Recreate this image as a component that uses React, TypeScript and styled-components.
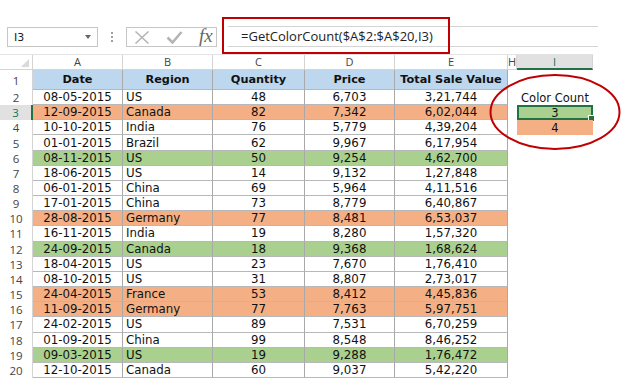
import React from 'react';
import styled, { createGlobalStyle } from 'styled-components';

type Fill = 'none' | 'head' | 'orange' | 'green';

const fills: Record<Fill, string> = {
  none: '#ffffff',
  head: '#bdd7ee',
  orange: '#f4b084',
  green: '#a9d08e',
};

const rows: { cells: string[]; fill: Fill }[] = [
  { cells: ['08-05-2015', 'US', '48', '6,703', '3,21,744'], fill: 'none' },
  { cells: ['12-09-2015', 'Canada', '82', '7,342', '6,02,044'], fill: 'orange' },
  { cells: ['10-10-2015', 'India', '76', '5,779', '4,39,204'], fill: 'none' },
  { cells: ['01-01-2015', 'Brazil', '62', '9,967', '6,17,954'], fill: 'none' },
  { cells: ['08-11-2015', 'US', '50', '9,254', '4,62,700'], fill: 'green' },
  { cells: ['18-06-2015', 'US', '14', '9,132', '1,27,848'], fill: 'none' },
  { cells: ['06-01-2015', 'China', '69', '5,964', '4,11,516'], fill: 'none' },
  { cells: ['17-01-2015', 'China', '73', '8,779', '6,40,867'], fill: 'none' },
  { cells: ['28-08-2015', 'Germany', '77', '8,481', '6,53,037'], fill: 'orange' },
  { cells: ['16-11-2015', 'India', '19', '8,280', '1,57,320'], fill: 'none' },
  { cells: ['24-09-2015', 'Canada', '18', '9,368', '1,68,624'], fill: 'green' },
  { cells: ['18-04-2015', 'US', '23', '7,670', '1,76,410'], fill: 'none' },
  { cells: ['08-10-2015', 'US', '31', '8,807', '2,73,017'], fill: 'none' },
  { cells: ['24-04-2015', 'France', '53', '8,412', '4,45,836'], fill: 'orange' },
  { cells: ['11-09-2015', 'Germany', '77', '7,763', '5,97,751'], fill: 'orange' },
  { cells: ['24-02-2015', 'US', '89', '7,531', '6,70,259'], fill: 'none' },
  { cells: ['01-09-2015', 'China', '99', '8,548', '8,46,252'], fill: 'none' },
  { cells: ['09-03-2015', 'US', '19', '9,288', '1,76,472'], fill: 'green' },
  { cells: ['12-10-2015', 'Canada', '60', '9,037', '5,42,220'], fill: 'none' },
];

const headers = ['Date', 'Region', 'Quantity', 'Price', 'Total Sale Value'];
const columns = ['A', 'B', 'C', 'D', 'E', 'H', 'I'];

// what goes into column I, by row number
const sideCells: Record<number, { text: string; fill: Fill; selected?: boolean }> = {
  2: { text: 'Color Count', fill: 'none' },
  3: { text: '3', fill: 'green', selected: true },
  4: { text: '4', fill: 'orange' },
};

function App() {
  return (
    <Page>
      <GlobalStyle />
      <Toolbar>
        <NameBox>
          <span>I3</span>
          <DropArrow />
        </NameBox>
        <Dots>
          <i />
          <i />
          <i />
        </Dots>
        <FxBox>
          <svg width="16" height="13" viewBox="0 0 16 13">
            <path d="M1.5 0.5 L14.5 12.5 M14.5 0.5 L1.5 12.5" stroke="#b4b4b4" strokeWidth="1.5" fill="none" />
          </svg>
          <svg width="17" height="13" viewBox="0 0 17 13">
            <path d="M1.5 6.5 L6.5 11.5 L15.5 1" stroke="#b4b4b4" strokeWidth="2.6" fill="none" />
          </svg>
          <FxText>fx</FxText>
        </FxBox>
        <FormulaBar>=GetColorCount($A$2:$A$20,I3)</FormulaBar>
      </Toolbar>

      <Sheet>
        <Corner />
        {columns.map((c) => (
          <ColHeader key={c} $selected={c === 'I'}>
            {c}
          </ColHeader>
        ))}

        <RowHeader $selected={false}>1</RowHeader>
        {headers.map((h) => (
          <Cell key={h} $fill="head" $bold $align="center">
            {h}
          </Cell>
        ))}
        <Blank />
        <Blank />

        {rows.map((r, i) => {
          const n = i + 2;
          const side = sideCells[n];
          return (
            <React.Fragment key={n}>
              <RowHeader $selected={n === 3}>{n}</RowHeader>
              {r.cells.map((v, j) => (
                <Cell key={j} $fill={r.fill} $align={j === 1 ? 'left' : 'center'}>
                  {v}
                </Cell>
              ))}
              <Blank />
              {side ? (
                <SideCell $fill={side.fill} $selected={!!side.selected}>
                  {side.text}
                  {side.selected && <FillHandle />}
                </SideCell>
              ) : (
                <Blank />
              )}
            </React.Fragment>
          );
        })}
      </Sheet>

      <FormulaCallout />
      <CountCallout width="136" height="80" viewBox="0 0 136 80">
        <ellipse cx="68" cy="40" rx="64.5" ry="37" fill="none" stroke="#c00000" strokeWidth="2" />
      </CountCallout>
    </Page>
  );
}

export default App;

const GlobalStyle = createGlobalStyle`
  html, body {
    margin: 0;
    background: #ffffff;
  }
  body {
    font-family: "DejaVu Sans", Verdana, sans-serif;
    color: #000;
  }
`;

const Page = styled.div`
  position: relative;
  width: 626px;
  height: 390px;
  overflow: hidden;
  background: #fff;
`;

const Toolbar = styled.div`
  display: flex;
  align-items: flex-start;
  padding: 26px 0 0 7px;
  height: 28px;
`;

const NameBox = styled.div`
  box-sizing: border-box;
  width: 91px;
  height: 20px;
  margin-top: 1px;
  border: 1px solid #c6c6c6;
  display: flex;
  align-items: center;
  justify-content: space-between;
  padding: 0 6px 0 6px;
  font-family: "DejaVu Sans", sans-serif;
  font-size: 11px;
  color: #222;
`;

const DropArrow = styled.span`
  width: 0;
  height: 0;
  border-left: 3.5px solid transparent;
  border-right: 3.5px solid transparent;
  border-top: 4px solid #666;
`;

const Dots = styled.div`
  width: 28px;
  height: 20px;
  margin-top: 1px;
  display: flex;
  flex-direction: column;
  align-items: center;
  justify-content: center;
  gap: 2px;

  i {
    width: 2px;
    height: 2px;
    background: #a0a0a0;
  }
`;

const FxBox = styled.div`
  box-sizing: border-box;
  width: 91px;
  height: 20px;
  margin-top: 1px;
  border: 1px solid #c6c6c6;
  display: flex;
  align-items: center;
  padding: 0 0 0 7px;
  gap: 16px;
`;

const FxText = styled.span`
  font-family: "Liberation Serif", "DejaVu Serif", serif;
  font-style: italic;
  font-size: 19px;
  color: #666;
  line-height: 18px;
  margin-top: -3px;
`;

const FormulaBar = styled.div`
  box-sizing: border-box;
  width: 370px;
  height: 21px;
  margin-left: 11px;
  border-top: 1px solid #d4d4d4;
  border-bottom: 1px solid #d4d4d4;
  padding-left: 13px;
  font-family: "Open Sans", sans-serif;
  font-size: 13px;
  line-height: 19px;
  color: #222;
`;

const Sheet = styled.div`
  display: grid;
  grid-template-columns: 33px 90px 90px 92px 90px 113px 9px 76px;
  grid-template-rows: 15px 20px repeat(19, 15.16px);
  width: 593px;
  border-top: 1px solid #e3e3e3;
  box-sizing: content-box;
`;

const Corner = styled.div`
  border-right: 1px solid #d4d4d4;
  border-bottom: 1px solid #d4d4d4;
  position: relative;

  &::after {
    content: '';
    position: absolute;
    right: 3px;
    bottom: 2px;
    width: 0;
    height: 0;
    border-left: 8px solid transparent;
    border-bottom: 8px solid #dadada;
  }
`;

const ColHeader = styled.div<{ $selected: boolean }>`
  box-sizing: border-box;
  border-right: 1px solid #d4d4d4;
  border-bottom: ${(p) => (p.$selected ? '2px solid #217346' : '1px solid #d4d4d4')};
  background: ${(p) => (p.$selected ? '#e1e1e1' : '#fff')};
  color: ${(p) => (p.$selected ? '#217346' : '#444')};
  font-family: "Open Sans", sans-serif;
  font-size: 11px;
  line-height: 13px;
  text-align: center;
  overflow: hidden;
`;

const RowHeader = styled.div<{ $selected: boolean }>`
  box-sizing: border-box;
  border-right: ${(p) => (p.$selected ? '2px solid #217346' : '1px solid #d4d4d4')};
  background: ${(p) => (p.$selected ? '#e1e1e1' : '#fff')};
  color: ${(p) => (p.$selected ? '#217346' : '#444')};
  font-family: "Open Sans", sans-serif;
  font-size: 11.5px;
  display: flex;
  align-items: center;
  justify-content: center;
`;

const Cell = styled.div<{ $fill: Fill; $bold?: boolean; $align: 'left' | 'center' }>`
  box-sizing: border-box;
  background: ${(p) => fills[p.$fill]};
  border-right: 1px solid #a9a9a9;
  border-bottom: 1px solid #b8b8b8;
  font-size: ${(p) => (p.$bold ? '11.3px' : '11.8px')};
  font-weight: ${(p) => (p.$bold ? 700 : 400)};
  padding: 0 ${(p) => (p.$align === 'left' ? '3px' : '0')};
  display: flex;
  align-items: center;
  justify-content: ${(p) => (p.$align === 'left' ? 'flex-start' : 'center')};
  white-space: nowrap;
  overflow: hidden;
  color: #111;
`;

const Blank = styled.div``;

const SideCell = styled.div<{ $fill: Fill; $selected: boolean }>`
  position: relative;
  box-sizing: border-box;
  background: ${(p) => fills[p.$fill]};
  border: ${(p) => (p.$selected ? '2px solid #217346' : 'none')};
  font-size: 11.5px;
  display: flex;
  align-items: center;
  justify-content: center;
  white-space: nowrap;
  color: #111;
`;

const FillHandle = styled.span`
  position: absolute;
  right: -4px;
  bottom: -4px;
  width: 5px;
  height: 5px;
  background: #217346;
  border: 1px solid #fff;
`;

const FormulaCallout = styled.div`
  position: absolute;
  left: 222px;
  top: 17px;
  width: 228px;
  height: 37px;
  box-sizing: border-box;
  border: 2px solid #c00000;
`;

const CountCallout = styled.svg`
  position: absolute;
  left: 487px;
  top: 72px;
`;
